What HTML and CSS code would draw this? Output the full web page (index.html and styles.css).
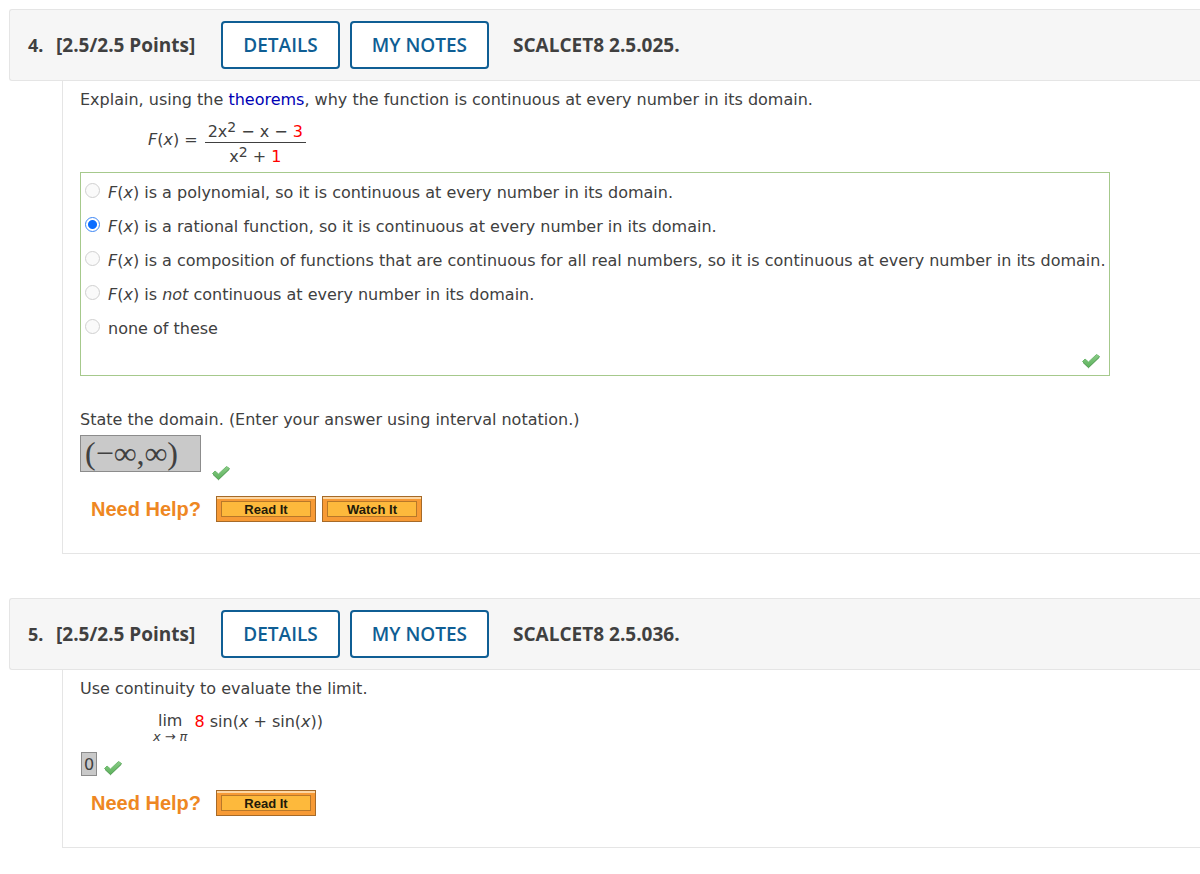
FILE: index.html
```
<!DOCTYPE html>
<html lang="en">
<head>
  <meta charset="UTF-8">
  <meta name="viewport" content="width=device-width, initial-scale=1.0">
  <title>Homework 2.5</title>
  <link rel="stylesheet" href="styles.css">
</head>
<body>
  <svg class="defs" aria-hidden="true">
    <defs>
      <linearGradient id="green" x1="0" y1="0" x2="0" y2="1">
        <stop offset="0" stop-color="#8acb86"/>
        <stop offset="1" stop-color="#5cb25c"/>
      </linearGradient>
      <symbol id="check" viewBox="0 0 20 16">
        <path d="M1.5 8.5 L4 6 L7.5 9 L15.5 1.5 L18.5 3.5 L7.5 14.5 Z" fill="url(#green)" stroke="#6fb970" stroke-linejoin="round"/>
        <path d="M2 9.5 L7.5 14.7 L18.5 4.2" fill="none" stroke="#569c57"/>
      </symbol>
    </defs>
  </svg>

  <section class="question">
    <header class="question-header">
      <span class="number">4.</span>
      <span class="points">[2.5/2.5 Points]</span>
      <button type="button" class="btn">DETAILS</button>
      <button type="button" class="btn">MY NOTES</button>
      <h2 class="code">SCALCET8 2.5.025.</h2>
    </header>
    <div class="question-body">
      <p class="prompt">Explain, using the <a href="#">theorems</a>, why the function is continuous at every number in its domain.</p>

      <div class="formula">
        <span class="name"><i>F</i>(<i>x</i>) =</span>
        <span class="fraction">
          <span class="top">2x<sup>2</sup> − x − <span class="red">3</span></span>
          <span class="bottom">x<sup>2</sup> + <span class="red">1</span></span>
        </span>
      </div>

      <div class="choices">
        <label><input type="radio" name="q4"><span><i>F</i>(<i>x</i>) is a polynomial, so it is continuous at every number in its domain.</span></label>
        <label><input type="radio" name="q4" checked><span><i>F</i>(<i>x</i>) is a rational function, so it is continuous at every number in its domain.</span></label>
        <label><input type="radio" name="q4"><span><i>F</i>(<i>x</i>) is a composition of functions that are continuous for all real numbers, so it is continuous at every number in its domain.</span></label>
        <label><input type="radio" name="q4"><span><i>F</i>(<i>x</i>) is <i>not</i> continuous at every number in its domain.</span></label>
        <label><input type="radio" name="q4"><span>none of these</span></label>
        <svg class="check"><use href="#check"/></svg>
      </div>

      <label class="prompt" for="domain">State the domain. (Enter your answer using interval notation.)</label>
      <div class="answer">
        <input type="text" id="domain" class="math-input" value="(−∞,∞)" readonly>
        <svg class="check"><use href="#check"/></svg>
      </div>

      <div class="help">
        <span class="help-title">Need Help?</span>
        <button type="button" class="help-btn">Read It</button>
        <button type="button" class="help-btn">Watch It</button>
      </div>
    </div>
  </section>

  <section class="question">
    <header class="question-header">
      <span class="number">5.</span>
      <span class="points">[2.5/2.5 Points]</span>
      <button type="button" class="btn">DETAILS</button>
      <button type="button" class="btn">MY NOTES</button>
      <h2 class="code">SCALCET8 2.5.036.</h2>
    </header>
    <div class="question-body">
      <label class="prompt" for="limit">Use continuity to evaluate the limit.</label>

      <div class="formula limit">
        <span class="lim">
          <span>lim</span>
          <span class="under"><i>x</i><span>→</span><i>π</i></span>
        </span>
        <span><span class="red">8</span> sin(<i>x</i> + sin(<i>x</i>))</span>
      </div>

      <div class="answer small">
        <input type="text" id="limit" class="short-input" value="0" readonly>
        <svg class="check"><use href="#check"/></svg>
      </div>

      <div class="help">
        <span class="help-title">Need Help?</span>
        <button type="button" class="help-btn">Read It</button>
      </div>
    </div>
  </section>
</body>
</html>
```
FILE: styles.css
```
* {
  box-sizing: border-box;
}

body {
  margin: 0;
  padding: 9px 0 16px 9px;
  background: #fff;
  color: #404040;
  font-family: Verdana, "DejaVu Sans", sans-serif;
  font-size: 16px;
  line-height: 20px;
}

.defs {
  position: absolute;
  width: 0;
  height: 0;
}

.question {
  margin-bottom: 44px;
}

.question:last-child {
  margin-bottom: 0;
}

.question-header {
  display: flex;
  align-items: center;
  padding: 11px 18px;
  background: #f6f6f6;
  border: 1px solid #e5e5e5;
  border-right: none;
  border-radius: 3px 0 0 3px;
  font-family: "Open Sans", sans-serif;
  font-size: 19px;
  font-weight: 700;
}

.number {
  width: 28px;
  font-family: "Noto Sans", sans-serif;
  font-size: 18px;
}

.points {
  margin-right: 26px;
}

.btn {
  height: 48px;
  margin-right: 10px;
  padding: 0 20px;
  background: #fff;
  border: 2px solid #0f5e94;
  border-radius: 4px;
  color: #0f5e94;
  font-family: "Open Sans", sans-serif;
  font-size: 19px;
  font-weight: 600;
  cursor: pointer;
}

.code {
  margin: 0 0 0 14px;
  font-size: 19px;
}

.question-body {
  margin-left: 53px;
  padding: 9px 0 30px 17px;
  border: 1px solid #e5e5e5;
  border-top: none;
  border-right: none;
}

.prompt {
  display: block;
  margin: 0;
}

.prompt a {
  color: #0000b4;
  text-decoration: none;
}

.red {
  color: #f00;
}

.formula {
  display: flex;
  align-items: flex-start;
  gap: 7px;
  margin: 12px 0 5px 68px;
}

.name {
  padding-top: 8px;
}

.fraction {
  display: flex;
  flex-direction: column;
  text-align: center;
}

.top {
  padding: 0 3px;
  border-bottom: 1px solid #404040;
}

.bottom {
  padding-top: 4px;
}

sup {
  font-size: 14px;
  line-height: 0;
  vertical-align: 5px;
}

.choices {
  display: flex;
  flex-direction: column;
  gap: 14px;
  margin: 0 90px 34px 0;
  padding: 10px 0 6px 4px;
  border: 1px solid #a6c98c;
}

.choices label {
  display: flex;
  align-items: flex-start;
  gap: 8px;
}

.choices input {
  appearance: none;
  flex: none;
  width: 15px;
  height: 15px;
  margin: 0;
  background: #fafafa;
  border: 1px solid #d0d0d0;
  border-radius: 50%;
}

.choices input:checked {
  background: radial-gradient(circle, #0a6cff 4px, #fff 5px);
  border-color: #3c86f5;
}

.check {
  width: 20px;
  height: 16px;
}

.choices .check {
  align-self: flex-end;
  margin-right: 8px;
}

.answer {
  display: flex;
  align-items: flex-end;
  gap: 10px;
  height: 46px;
  margin: 5px 0 14px;
}

.math-input,
.short-input {
  background: #c9c9c9;
  border: 1px solid #8c8c8c;
  color: #404040;
}

.math-input {
  align-self: flex-start;
  width: 121px;
  height: 37px;
  padding: 0 4px;
  font-family: "Liberation Serif", serif;
  font-size: 32px;
}

.help {
  display: flex;
  align-items: center;
  gap: 6px;
  height: 28px;
  padding-left: 11px;
}

.help-title {
  margin-right: 9px;
  color: #ee8722;
  font-family: "Liberation Sans", Arial, sans-serif;
  font-size: 20px;
  font-weight: 700;
}

.help-btn {
  width: 100px;
  height: 26px;
  padding: 0;
  background: #fdb93c;
  border: 1px solid #a66a28;
  box-shadow: inset 0 2px #fdd7a4, inset 0 0 0 4px #f79a35, inset 0 0 0 5px #b87829;
  color: #221a0a;
  font-family: "Liberation Sans", Arial, sans-serif;
  font-size: 13px;
  font-weight: 700;
  cursor: pointer;
}

.limit {
  margin: 13px 0 8px 73px;
}

.lim {
  display: flex;
  flex-direction: column;
  line-height: 18px;
  text-align: center;
}

.under {
  display: flex;
  gap: 4px;
  font-size: 13px;
  line-height: 14px;
}

.small {
  height: 24px;
  gap: 6px;
  margin: 0 0 13px;
}

.short-input {
  width: 16px;
  height: 24px;
  margin-left: 1px;
  padding: 0 2px;
  font-family: Verdana, "DejaVu Sans", sans-serif;
  font-size: 16px;
}
```
